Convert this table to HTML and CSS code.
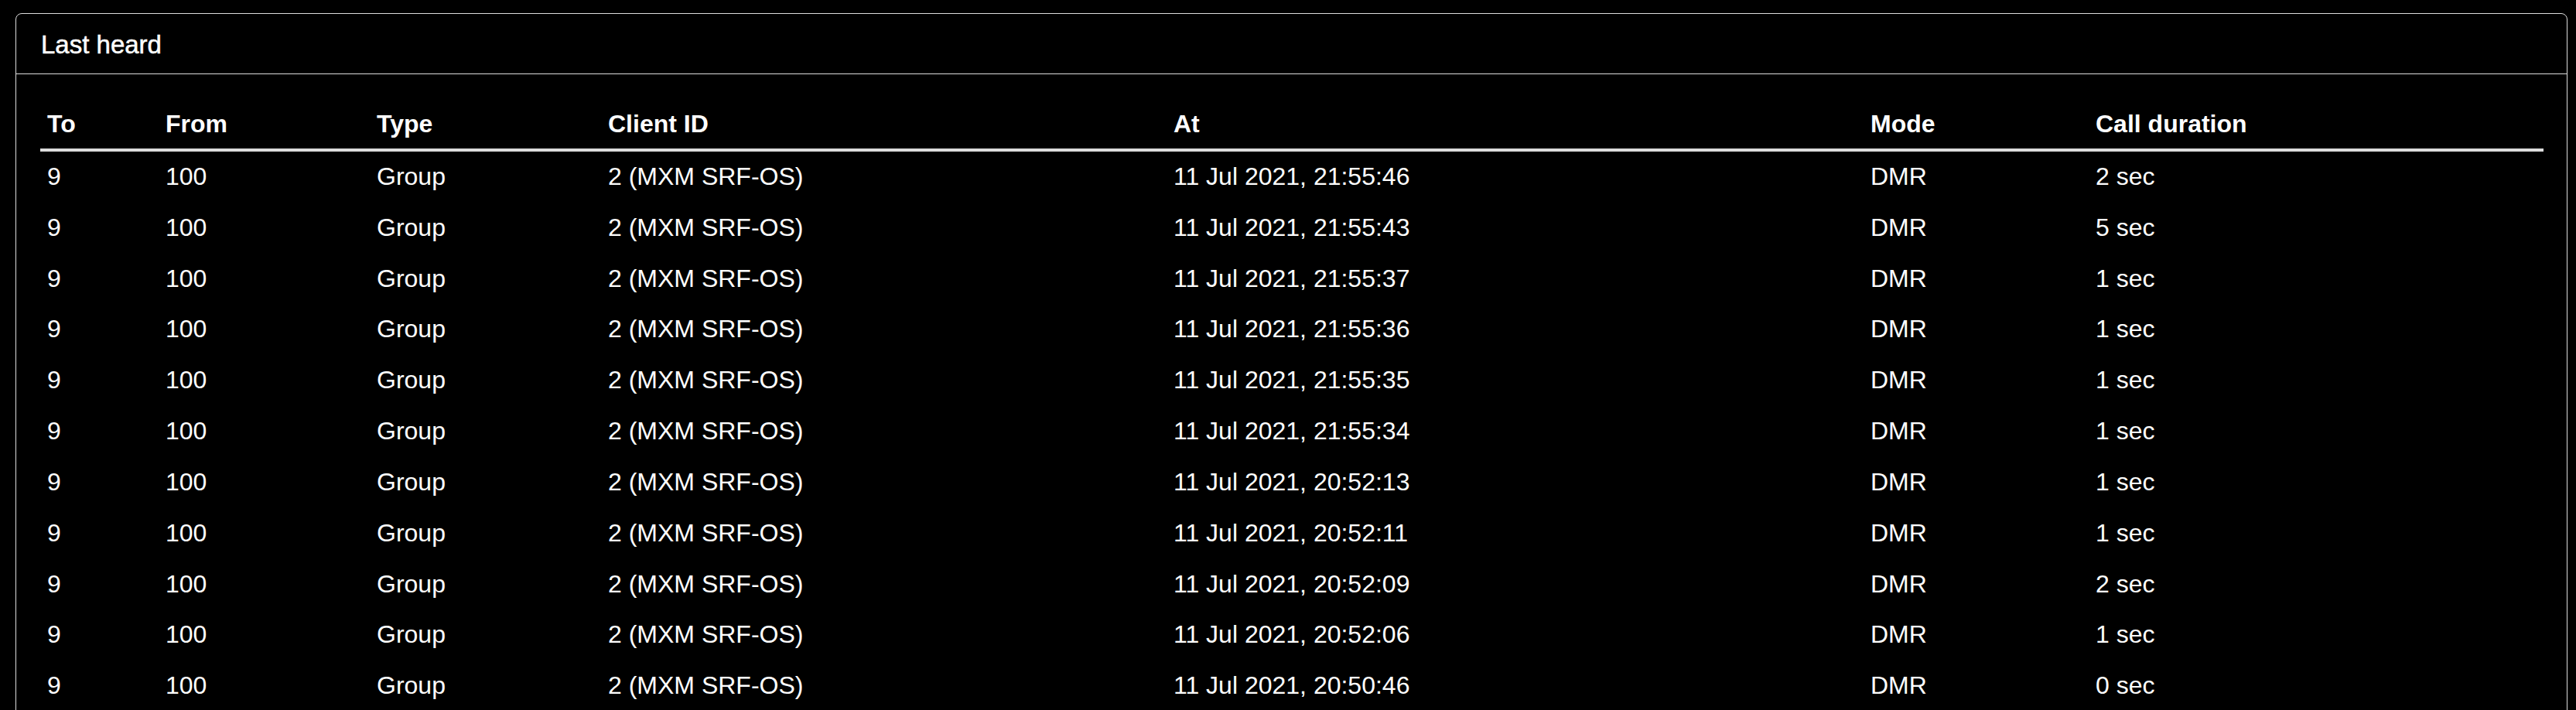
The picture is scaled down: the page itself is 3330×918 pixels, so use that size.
FILE: index.html
```html
<!DOCTYPE html>
<html lang="en">
<head>
<meta charset="utf-8">
<title>Last heard</title>
<link rel="stylesheet" href="styles.css">
</head>
<body>
<main class="page">
  <section class="card">
    <header class="card-header">Last heard</header>
    <div class="card-body">
      <table class="lh-table">
        <colgroup>
          <col class="c-to"><col class="c-from"><col class="c-type"><col class="c-client"><col class="c-at"><col class="c-mode"><col class="c-dur">
        </colgroup>
        <thead>
          <tr><th>To</th><th>From</th><th>Type</th><th>Client ID</th><th>At</th><th>Mode</th><th>Call duration</th></tr>
        </thead>
        <tbody>
          <tr><td>9</td><td>100</td><td>Group</td><td>2 (MXM SRF-OS)</td><td>11 Jul 2021, 21:55:46</td><td>DMR</td><td>2 sec</td></tr>
          <tr><td>9</td><td>100</td><td>Group</td><td>2 (MXM SRF-OS)</td><td>11 Jul 2021, 21:55:43</td><td>DMR</td><td>5 sec</td></tr>
          <tr><td>9</td><td>100</td><td>Group</td><td>2 (MXM SRF-OS)</td><td>11 Jul 2021, 21:55:37</td><td>DMR</td><td>1 sec</td></tr>
          <tr><td>9</td><td>100</td><td>Group</td><td>2 (MXM SRF-OS)</td><td>11 Jul 2021, 21:55:36</td><td>DMR</td><td>1 sec</td></tr>
          <tr><td>9</td><td>100</td><td>Group</td><td>2 (MXM SRF-OS)</td><td>11 Jul 2021, 21:55:35</td><td>DMR</td><td>1 sec</td></tr>
          <tr><td>9</td><td>100</td><td>Group</td><td>2 (MXM SRF-OS)</td><td>11 Jul 2021, 21:55:34</td><td>DMR</td><td>1 sec</td></tr>
          <tr><td>9</td><td>100</td><td>Group</td><td>2 (MXM SRF-OS)</td><td>11 Jul 2021, 20:52:13</td><td>DMR</td><td>1 sec</td></tr>
          <tr><td>9</td><td>100</td><td>Group</td><td>2 (MXM SRF-OS)</td><td>11 Jul 2021, 20:52:11</td><td>DMR</td><td>1 sec</td></tr>
          <tr><td>9</td><td>100</td><td>Group</td><td>2 (MXM SRF-OS)</td><td>11 Jul 2021, 20:52:09</td><td>DMR</td><td>2 sec</td></tr>
          <tr><td>9</td><td>100</td><td>Group</td><td>2 (MXM SRF-OS)</td><td>11 Jul 2021, 20:52:06</td><td>DMR</td><td>1 sec</td></tr>
          <tr><td>9</td><td>100</td><td>Group</td><td>2 (MXM SRF-OS)</td><td>11 Jul 2021, 20:50:46</td><td>DMR</td><td>0 sec</td></tr>
        </tbody>
      </table>
    </div>
  </section>
</main>
</body>
</html>
```

FILE: styles.css
```css
html, body {
  margin: 0;
  padding: 0;
  background: #000;
  color: #fff;
  font-family: "Liberation Sans", Arial, Helvetica, sans-serif;
  font-size: 32px;
}

.page {
  padding: 17px 11px 0 20px;
}

.card {
  border: 1px solid #dcdcdc;
  border-radius: 8px;
  background: #000;
}

.card-header {
  padding: 16px 32px 13px 32px;
  line-height: 48px;
  font-size: 33px;
  border-bottom: 1px solid #dcdcdc;
  -webkit-text-stroke: 0.5px #fff;
}

.card-body {
  padding: 32px 30px 32px 31px;
}

.lh-table {
  width: 100%;
  border-collapse: collapse;
  table-layout: fixed;
}

.c-to { width: 153px; }
.c-from { width: 273px; }
.c-type { width: 299px; }
.c-client { width: 731px; }
.c-at { width: 901px; }
.c-mode { width: 291px; }
.c-dur { width: auto; }

.lh-table th,
.lh-table td {
  text-align: left;
  padding: 10px 10px 10px 9px;
  line-height: 45.84px;
  white-space: nowrap;
  vertical-align: top;
}

.lh-table th {
  font-weight: bold;
  padding-bottom: 8px;
  border-bottom: 4px solid #dcdcdc;
}

.lh-table td {
  font-weight: normal;
}
```
